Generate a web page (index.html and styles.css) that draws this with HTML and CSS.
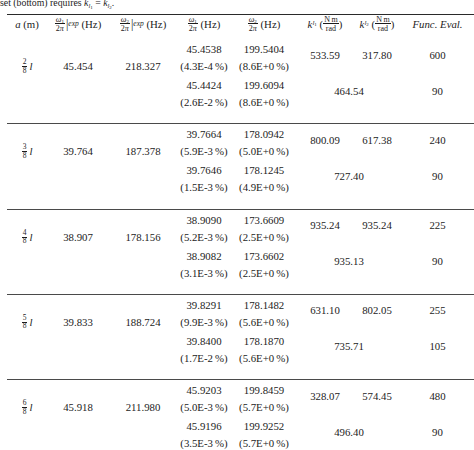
FILE: index.html
```html
<!DOCTYPE html>
<html>
<head>
<meta charset="utf-8">
<link rel="stylesheet" href="styles.css">
</head>
<body>
<p class="caption">set (bottom) requires <i>k</i><sub><i>l</i><sub>1</sub></sub> = <i>k</i><sub><i>l</i><sub>2</sub></sub>.</p>
<div class="table">
  <div class="head">
    <div class="hc"><i>a</i>&nbsp;(m)</div>
    <div class="hc"><span class="frac hf"><span class="num"><i>ω</i><sub>1</sub></span><span class="den">2<i>π</i></span></span><span class="bar">|</span><sub class="exp"><i>exp</i></sub>&nbsp;(Hz)</div>
    <div class="hc"><span class="frac hf"><span class="num"><i>ω</i><sub>2</sub></span><span class="den">2<i>π</i></span></span><span class="bar">|</span><sub class="exp"><i>exp</i></sub>&nbsp;(Hz)</div>
    <div class="hc"><span class="frac hf"><span class="num"><i>ω</i><sub>1</sub></span><span class="den">2<i>π</i></span></span>&nbsp;(Hz)</div>
    <div class="hc"><span class="frac hf"><span class="num"><i>ω</i><sub>2</sub></span><span class="den">2<i>π</i></span></span>&nbsp;(Hz)</div>
    <div class="hc"><i>k</i><sub class="kl"><i>l</i><sub>1</sub></sub>&nbsp;(<span class="frac hf"><span class="num">N&thinsp;m</span><span class="den">rad</span></span>)</div>
    <div class="hc"><i>k</i><sub class="kl"><i>l</i><sub>2</sub></sub>&nbsp;(<span class="frac hf"><span class="num">N&thinsp;m</span><span class="den">rad</span></span>)</div>
    <div class="hc"><i>Func. Eval.</i></div>
  </div>

  <div class="sec first">
    <div class="cell c1 r2"><span class="frac"><span class="num">2</span><span class="den">8</span></span><i class="ell">l</i></div>
    <div class="cell c2 r2">45.454</div>
    <div class="cell c3 r2">218.327</div>
    <div class="cell c4 r1">45.4538</div>
    <div class="cell c4 r2">(4.3E-4&thinsp;%)</div>
    <div class="cell c4 r4">45.4424</div>
    <div class="cell c4 r5">(2.6E-2&thinsp;%)</div>
    <div class="cell c5 r1">199.5404</div>
    <div class="cell c5 r2">(8.6E+0&thinsp;%)</div>
    <div class="cell c5 r4">199.6094</div>
    <div class="cell c5 r5">(8.6E+0&thinsp;%)</div>
    <div class="cell c6 s1">533.59</div>
    <div class="cell c7 s1">317.80</div>
    <div class="cell c8 s1">600</div>
    <div class="cell c67 s2">464.54</div>
    <div class="cell c8 s2">90</div>
  </div>

  <div class="sec">
    <div class="cell c1 r2"><span class="frac"><span class="num">3</span><span class="den">8</span></span><i class="ell">l</i></div>
    <div class="cell c2 r2">39.764</div>
    <div class="cell c3 r2">187.378</div>
    <div class="cell c4 r1">39.7664</div>
    <div class="cell c4 r2">(5.9E-3&thinsp;%)</div>
    <div class="cell c4 r4">39.7646</div>
    <div class="cell c4 r5">(1.5E-3&thinsp;%)</div>
    <div class="cell c5 r1">178.0942</div>
    <div class="cell c5 r2">(5.0E+0&thinsp;%)</div>
    <div class="cell c5 r4">178.1245</div>
    <div class="cell c5 r5">(4.9E+0&thinsp;%)</div>
    <div class="cell c6 s1">800.09</div>
    <div class="cell c7 s1">617.38</div>
    <div class="cell c8 s1">240</div>
    <div class="cell c67 s2">727.40</div>
    <div class="cell c8 s2">90</div>
  </div>

  <div class="sec">
    <div class="cell c1 r2"><span class="frac"><span class="num">4</span><span class="den">8</span></span><i class="ell">l</i></div>
    <div class="cell c2 r2">38.907</div>
    <div class="cell c3 r2">178.156</div>
    <div class="cell c4 r1">38.9090</div>
    <div class="cell c4 r2">(5.2E-3&thinsp;%)</div>
    <div class="cell c4 r4">38.9082</div>
    <div class="cell c4 r5">(3.1E-3&thinsp;%)</div>
    <div class="cell c5 r1">173.6609</div>
    <div class="cell c5 r2">(2.5E+0&thinsp;%)</div>
    <div class="cell c5 r4">173.6602</div>
    <div class="cell c5 r5">(2.5E+0&thinsp;%)</div>
    <div class="cell c6 s1">935.24</div>
    <div class="cell c7 s1">935.24</div>
    <div class="cell c8 s1">225</div>
    <div class="cell c67 s2">935.13</div>
    <div class="cell c8 s2">90</div>
  </div>

  <div class="sec">
    <div class="cell c1 r2"><span class="frac"><span class="num">5</span><span class="den">8</span></span><i class="ell">l</i></div>
    <div class="cell c2 r2">39.833</div>
    <div class="cell c3 r2">188.724</div>
    <div class="cell c4 r1">39.8291</div>
    <div class="cell c4 r2">(9.9E-3&thinsp;%)</div>
    <div class="cell c4 r4">39.8400</div>
    <div class="cell c4 r5">(1.7E-2&thinsp;%)</div>
    <div class="cell c5 r1">178.1482</div>
    <div class="cell c5 r2">(5.6E+0&thinsp;%)</div>
    <div class="cell c5 r4">178.1870</div>
    <div class="cell c5 r5">(5.6E+0&thinsp;%)</div>
    <div class="cell c6 s1">631.10</div>
    <div class="cell c7 s1">802.05</div>
    <div class="cell c8 s1">255</div>
    <div class="cell c67 s2">735.71</div>
    <div class="cell c8 s2">105</div>
  </div>

  <div class="sec">
    <div class="cell c1 r2"><span class="frac"><span class="num">6</span><span class="den">8</span></span><i class="ell">l</i></div>
    <div class="cell c2 r2">45.918</div>
    <div class="cell c3 r2">211.980</div>
    <div class="cell c4 r1">45.9203</div>
    <div class="cell c4 r2">(5.0E-3&thinsp;%)</div>
    <div class="cell c4 r4">45.9196</div>
    <div class="cell c4 r5">(3.5E-3&thinsp;%)</div>
    <div class="cell c5 r1">199.8459</div>
    <div class="cell c5 r2">(5.7E+0&thinsp;%)</div>
    <div class="cell c5 r4">199.9252</div>
    <div class="cell c5 r5">(5.7E+0&thinsp;%)</div>
    <div class="cell c6 s1">328.07</div>
    <div class="cell c7 s1">574.45</div>
    <div class="cell c8 s1">480</div>
    <div class="cell c67 s2">496.40</div>
    <div class="cell c8 s2">90</div>
  </div>
</div>
</body>
</html>
```

FILE: styles.css
```css
html {
  overflow: hidden;
}

body {
  margin: 0;
  background: #ffffff;
  color: #1c1c1c;
  font-family: "Liberation Serif", "Times New Roman", serif;
  font-size: 10.8px;
}

.caption {
  margin: -3px 0 0 0;
  height: 12px;
  font-size: 9.8px;
  line-height: 12px;
  white-space: nowrap;
}

.caption sub {
  font-size: 6.5px;
  vertical-align: -2px;
  line-height: 0;
}

.caption sub sub {
  font-size: 5px;
  vertical-align: -1px;
}

.table {
  margin: 4.5px 0 0 7px;
  width: 467px;
  border-top: 1.5px solid #2a2a2a;
}

.head,
.sec {
  display: grid;
  grid-template-columns: 40px 62px 68px 54px 66px 56px 48px 73px;
}

.head {
  height: 23.5px;
  box-sizing: border-box;
  padding-top: 2px;
  align-items: start;
}

.hc {
  display: flex;
  justify-content: center;
  align-items: center;
  height: 14px;
  white-space: nowrap;
  line-height: 14px;
}

.frac {
  display: inline-flex;
  flex-direction: column;
  align-items: center;
  font-size: 7.5px;
  line-height: 6.5px;
  vertical-align: middle;
}

.frac.hf {
  font-size: 8px;
  line-height: 7px;
}

.frac .num {
  border-bottom: 0.6px solid currentColor;
  padding: 0 1px 0.5px;
}

.frac .den {
  padding-top: 0.5px;
}

.frac sub {
  font-size: 5px;
  vertical-align: -1px;
  line-height: 0;
}

.bar {
  font-size: 12px;
  line-height: 14px;
  margin-left: 1px;
}

.exp {
  font-size: 7.5px;
  vertical-align: -2px;
  line-height: 0;
}

.kl {
  font-size: 7px;
  vertical-align: -2px;
  line-height: 0;
}

.kl sub {
  font-size: 5px;
  vertical-align: -1px;
}

.sec {
  height: 85.33px;
  box-sizing: border-box;
  border-top: 1px solid #4a4a4a;
  padding-top: 2px;
  grid-template-rows: 17px 17px 2px 17px 17px;
}

.sec.first {
  border-top-color: transparent;
}

.cell {
  display: flex;
  justify-content: center;
  align-items: center;
  white-space: nowrap;
  line-height: 17px;
}

.ell {
  margin-left: 2px;
}

.c1 { grid-column: 1; }
.c2 { grid-column: 2; }
.c3 { grid-column: 3; }
.c4 { grid-column: 4; }
.c5 { grid-column: 5; }
.c6 { grid-column: 6; }
.c7 { grid-column: 7; }
.c8 { grid-column: 8; }
.c67 { grid-column: 6 / 8; }

.r1 { grid-row: 1; }
.r2 { grid-row: 2; }
.r4 { grid-row: 4; }
.r5 { grid-row: 5; }

.s1,
.s2 {
  padding-bottom: 6px;
}

.s1 { grid-row: 1 / 3; }
.s2 { grid-row: 4 / 6; }
```
